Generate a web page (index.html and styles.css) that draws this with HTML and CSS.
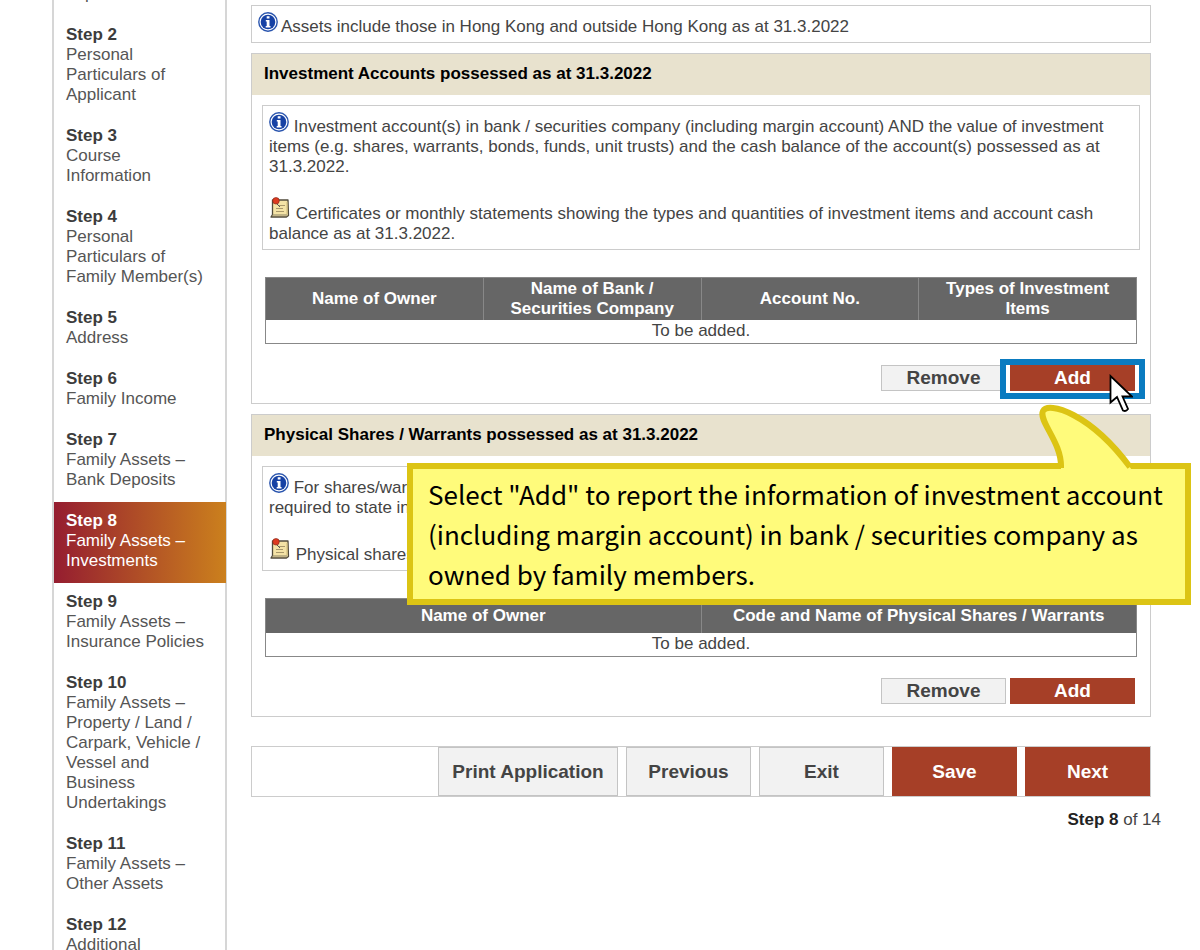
FILE: index.html
```html
<!DOCTYPE html>
<html>
<head>
<title>Family Assets - Investments</title>
<link rel="stylesheet" href="styles.css">
</head>
<body>

<svg class="symbols" aria-hidden="true">
  <symbol id="icon-info" viewBox="0 0 20 20">
    <circle cx="10" cy="10" r="9.2" fill="#fff" stroke="#2a55ae" stroke-width="1.4"/>
    <circle cx="10" cy="10" r="7.3" fill="#1641a4"/>
    <path d="M8.7 4.2h2.8v2.3H8.7zM7.8 8h3.7v6h1v1.5H7.7V14h1V9.5h-.9z" fill="#fff"/>
  </symbol>
  <symbol id="icon-note" viewBox="0 0 20 21">
    <path d="M2.5 3H18l.5 15.500-2 1.500H1l1.500-2.500z" fill="#f4e3a6" stroke="#514b3c" stroke-width="1.3" stroke-linejoin="round"/>
    <path d="M2.5 18H17" stroke="#8b8264"/>
    <path d="M17 5v12" stroke="#cdb878"/>
    <path d="M9 8.5h6M6 11.5h7M6 14.5h8" stroke="#a8976a"/>
    <path d="M6 6l4 4" stroke="#555"/>
    <circle cx="6" cy="3.8" r="3.3" fill="#dd3a20" stroke="#7c2416" stroke-width=".6"/>
  </symbol>
</svg>

<div class="page">

<ul class="steps">
  <li><a href="#step1"><b>Step 1</b> Important Notes</a></li>
  <li><a href="#step2"><b>Step 2</b> Personal Particulars of Applicant</a></li>
  <li><a href="#step3"><b>Step 3</b> Course Information</a></li>
  <li><a href="#step4"><b>Step 4</b> Personal Particulars of Family Member(s)</a></li>
  <li><a href="#step5"><b>Step 5</b> Address</a></li>
  <li><a href="#step6"><b>Step 6</b> Family Income</a></li>
  <li><a href="#step7"><b>Step 7</b> Family Assets &ndash; Bank Deposits</a></li>
  <li class="current"><a href="#step8"><b>Step 8</b> Family Assets &ndash; Investments</a></li>
  <li><a href="#step9"><b>Step 9</b> Family Assets &ndash; Insurance Policies</a></li>
  <li><a href="#step10"><b>Step 10</b> Family Assets &ndash; Property / Land / Carpark, Vehicle / Vessel and Business Undertakings</a></li>
  <li><a href="#step11"><b>Step 11</b> Family Assets &ndash; Other Assets</a></li>
  <li><a href="#step12"><b>Step 12</b> Additional</a></li>
</ul>

<div class="main">
  <div class="notice"><svg class="icon"><use href="#icon-info"/></svg>Assets include those in Hong Kong and outside Hong Kong as at 31.3.2022</div>

  <div class="panel">
    <h2>Investment Accounts possessed as at 31.3.2022</h2>
    <div class="note">
      <p><svg class="icon"><use href="#icon-info"/></svg> Investment account(s) in bank / securities company (including margin account) AND the value of investment items (e.g. shares, warrants, bonds, funds, unit trusts) and the cash balance of the account(s) possessed as at 31.3.2022.</p>
      <p><svg class="icon pin"><use href="#icon-note"/></svg> Certificates or monthly statements showing the types and quantities of investment items and account cash balance as at 31.3.2022.</p>
    </div>
    <table class="records">
      <tr><th>Name of Owner</th><th>Name of Bank / Securities Company</th><th>Account No.</th><th>Types of Investment Items</th></tr>
      <tr><td colspan="4">To be added.</td></tr>
    </table>
    <div class="actions">
      <button type="button">Remove</button>
      <span class="highlight">
        <button type="button" class="primary">Add</button>
        <svg class="cursor" viewBox="0 0 24 40">
          <path d="M1.5 2v26.500L8 23l6 13.500q3 1.500 5-1.500l-5.500-12.500H23z" fill="#fff" stroke="#000" stroke-width="1.8"/>
        </svg>
      </span>
    </div>
  </div>

  <div class="panel">
    <h2>Physical Shares / Warrants possessed as at 31.3.2022</h2>
    <div class="note">
      <p><svg class="icon"><use href="#icon-info"/></svg> For shares/warr<br/>required to state in</p>
      <p><svg class="icon pin"><use href="#icon-note"/></svg> Physical shares</p>
    </div>
    <table class="records single">
      <tr><th>Name of Owner</th><th>Code and Name of Physical Shares / Warrants</th></tr>
      <tr><td colspan="2">To be added.</td></tr>
    </table>
    <div class="actions">
      <button type="button">Remove</button>
      <button type="button" class="primary">Add</button>
    </div>
    <div class="callout">
      Select "Add" to report the information of investment account (including margin account) in bank / securities company as owned by family members.
      <svg class="tail" viewBox="0 0 100 66">
        <path d="M23 66C24 38 0 17 5 7C10-3 52 9 94 66" fill="#fffb7b"/>
        <path d="M23 64C24 38 0 17 5 7C10-3 52 9 92 63" fill="none" stroke="#dcc414" stroke-width="6"/>
      </svg>
    </div>
  </div>

  <div class="navbar">
    <button type="button" class="wide">Print Application</button>
    <button type="button">Previous</button>
    <button type="button">Exit</button>
    <button type="button" class="primary">Save</button>
    <button type="button" class="primary">Next</button>
  </div>
  <div class="progress"><b>Step 8</b> of 14</div>
</div>

</div>
</body>
</html>
```
FILE: styles.css
```css
body {
  margin: 0;
  height: 100vh;
  overflow: hidden;
  background: #fff;
  color: #444;
  font: 17px/20px "Liberation Sans", Arial, sans-serif;
}
.symbols {
  display: none;
}
.page {
  display: flex;
  align-items: flex-start;
  gap: 24px;
  padding: 0 49px 0 52px;
}

/* step list, scrolled so that step 2 is at the top */
.steps {
  flex: 0 0 171px;
  list-style: none;
  margin: -45px 0 0;
  padding: 0;
  border: solid #d6d6d6;
  border-width: 0 2px;
}
.steps a {
  display: block;
  padding: 9px 16px 12px 12px;
  color: #555;
  text-decoration: none;
}
.steps b {
  display: block;
  color: #3c3c3c;
}
.steps .current a {
  margin-right: -1px;
  background: linear-gradient(to right, #951d30, #cb801d);
  color: #fff;
}
.steps .current b {
  color: #fff;
}

.main {
  flex: 1;
  min-width: 0;
  padding-top: 5px;
}
.notice {
  border: 1px solid #ccc;
  padding: 6px 6px 5px;
}
.notice .icon {
  margin-right: 3px;
}
.panel {
  position: relative;
  margin-top: 10px;
  border: 1px solid #ccc;
  padding-bottom: 12px;
}
.panel h2 {
  margin: 0;
  padding: 10px 12px 11px;
  background: #e8e2ce;
  color: #000;
  font-size: 17px;
  line-height: 20px;
}
.note {
  margin: 10px 10px 27px;
  border: 1px solid #ccc;
  padding: 6px 6px 5px;
}
.note p {
  margin: 0;
}
.note p + p {
  margin-top: 20px;
}
.icon {
  width: 20px;
  height: 20px;
  vertical-align: 0;
}
.icon.pin {
  width: 22px;
  height: 21px;
  vertical-align: 1px;
}

.records {
  width: calc(100% - 26px);
  margin: 0 13px;
  border: 1px solid #888;
  border-collapse: collapse;
  table-layout: fixed;
  text-align: center;
}
.records th {
  padding: 1px 20px;
  background: #666;
  border-left: 1px solid #888;
  color: #fff;
}
.records.single th {
  padding: 7px 10px;
}
.records td {
  padding: 1px 0 2px;
}

button {
  height: 26px;
  width: 125px;
  padding: 0;
  border: 1px solid #c4c4c4;
  background: #f2f2f2;
  color: #444;
  font: bold 19px/20px "Liberation Sans", Arial, sans-serif;
}
button.primary {
  border-color: #a63f27;
  background: #a63f27;
  color: #fff;
}
.actions {
  display: flex;
  justify-content: flex-end;
  gap: 4px;
  margin: 21px 15px 0 0;
}
.highlight {
  position: relative;
  display: flex;
}
.highlight::after {
  content: "";
  position: absolute;
  inset: -6px -10px -8px;
  border: 6px solid #0a7bc0;
}
.cursor {
  position: absolute;
  z-index: 1;
  right: 2px;
  top: 9px;
  width: 24px;
  height: 40px;
}

.callout {
  position: absolute;
  left: 155px;
  right: -41px;
  top: 48px;
  border: 6px solid #dcc414;
  padding: 5px 15px;
  background: #fffb7b;
  color: #000;
  font: 26px/40px "Noto Sans CJK SC", sans-serif;
}
.tail {
  position: absolute;
  right: 47px;
  bottom: 100%;
  margin-bottom: -1px;
  width: 100px;
  height: 66px;
}

.navbar {
  display: flex;
  justify-content: flex-end;
  gap: 8px;
  margin-top: 29px;
  border: 1px solid #ccc;
}
.navbar button {
  height: 49px;
}
.navbar .wide {
  width: 180px;
}
.progress {
  margin: 13px -10px 0 0;
  text-align: right;
}
.progress b {
  color: #222;
}
```
